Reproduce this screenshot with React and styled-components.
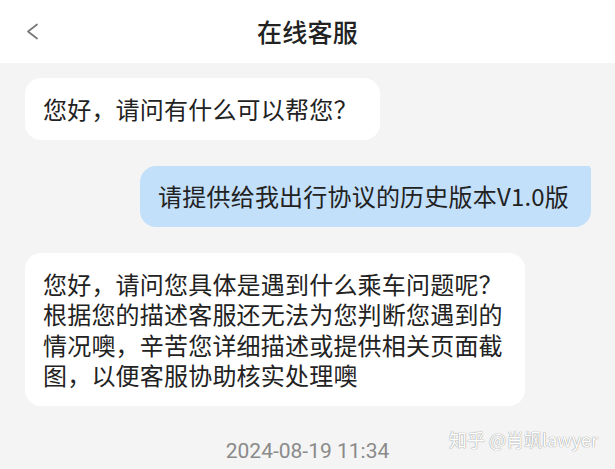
import styled, { createGlobalStyle } from 'styled-components';

const GlobalStyle = createGlobalStyle`
    body {
        margin: 0;
        background: #f4f4f4;
        font-family: "Noto Sans CJK SC", "Noto Sans", sans-serif;
    }
`;

const messages = [
    { id: 1, mine: false, text: '您好，请问有什么可以帮您？' },
    { id: 2, mine: true, text: '请提供给我出行协议的历史版本V1.0版' },
    {
        id: 3,
        mine: false,
        text: '您好，请问您具体是遇到什么乘车问题呢？根据您的描述客服还无法为您判断您遇到的情况噢，辛苦您详细描述或提供相关页面截图，以便客服协助核实处理噢',
    },
];

const App = () => {
    return (
        <Page>
            <GlobalStyle />
            <Header>
                <BackButton aria-label="返回">
                    <svg width="13" height="17" viewBox="0 0 13 17" fill="none">
                        <path d="M11 1.5L2 8.5L11 15.5" stroke="#7a7a7a" strokeWidth="1.8" strokeLinecap="round" strokeLinejoin="round" />
                    </svg>
                </BackButton>
                <Title>在线客服</Title>
                <span />
            </Header>

            <MessageList>
                {messages.map((msg) => (
                    <Row key={msg.id} $mine={msg.mine}>
                        <Bubble $mine={msg.mine}>{msg.text}</Bubble>
                    </Row>
                ))}
            </MessageList>

            <Time>2024-08-19 11:34</Time>
            <Watermark>知乎 @肖飒lawyer</Watermark>
        </Page>
    );
};

export default App;

const Page = styled.div`
    position: relative;
    min-height: 469px;
    background: #f4f4f4;
    overflow: hidden;
`;

const Header = styled.header`
    height: 63px;
    background: #ffffff;
    display: grid;
    grid-template-columns: 80px 1fr 80px;
    align-items: center;
`;

const BackButton = styled.button`
    background: none;
    border: none;
    padding: 0 0 0 26px;
    margin: 0;
    height: 63px;
    display: flex;
    align-items: center;
    cursor: pointer;
`;

const Title = styled.h1`
    margin: 0;
    text-align: center;
    font-size: 25px;
    font-weight: 500;
    color: #222222;
    letter-spacing: 0.2px;
    line-height: 63px;
`;

const MessageList = styled.div`
    display: flex;
    flex-direction: column;
    gap: 26px;
    padding: 15px 24px 0 25px;
`;

const Row = styled.div`
    display: flex;
    justify-content: ${(props) => (props.$mine ? 'flex-end' : 'flex-start')};
`;

const Bubble = styled.div`
    max-width: 460px;
    padding: 15.5px 22px 15.5px 18px;
    font-size: 24px;
    letter-spacing: 0.2px;
    line-height: 30.5px;
    color: #222222;
    background: ${(props) => (props.$mine ? '#c3e0fa' : '#ffffff')};
    border-radius: ${(props) => (props.$mine ? '16px 3px 16px 16px' : '16px')};
`;

const Time = styled.div`
    margin-top: 31px;
    text-align: center;
    font-family: "Roboto", "Noto Sans", sans-serif;
    font-size: 21px;
    line-height: 28px;
    color: #8a8a8a;
`;

const Watermark = styled.div`
    position: absolute;
    right: 17px;
    bottom: 20px;
    font-size: 18px;
    line-height: 20px;
    color: #ffffff;
    text-shadow: 0 0 1px #9a9a9a, 0 0 1px #9a9a9a;
`;
